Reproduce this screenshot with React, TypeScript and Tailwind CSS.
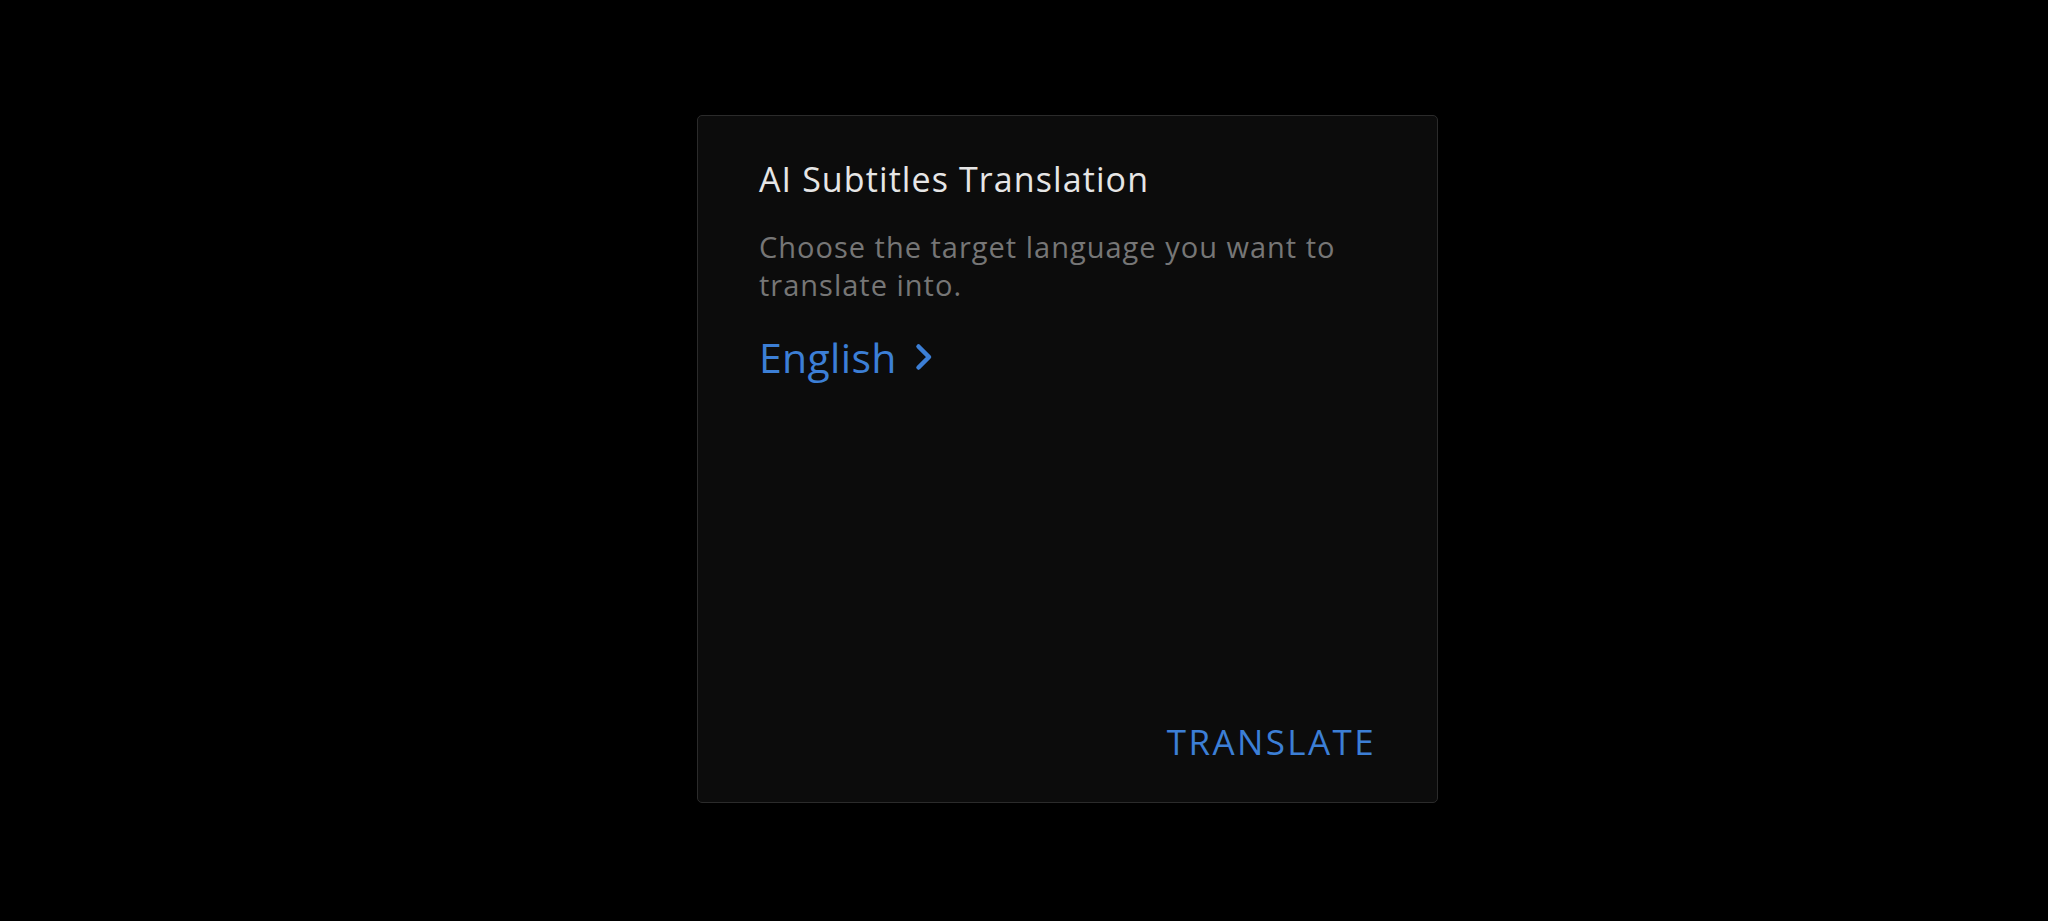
export default function App() {
  return (
    <div className="min-h-[921px] w-full bg-black" style={{ fontFamily: "'Open Sans', 'Noto Sans', sans-serif" }}>
      <div className="pt-[115px] pl-[697px]">
        <div className="flex h-[688px] w-[741px] flex-col rounded-[5px] border border-[#2b2b2b] bg-[#0c0c0c] px-[61px] pt-[43px] pb-[40px]">
          <h1 className="text-[34px] leading-[40px] font-normal tracking-[1.1px] text-[#e6e6e6]">AI Subtitles Translation</h1>
          <p className="mt-[29px] text-[29px] leading-[38px] tracking-[1px] text-[#767676]">
            Choose the target language you want to translate into.
          </p>
          <button className="mt-[29px] flex items-center gap-[18px] self-start text-[41px] leading-[48px] tracking-[0.3px] text-[#3c7fd6]">
            <span>English</span>
            <svg width="18" height="28" viewBox="0 0 18 28" fill="none">
              <path d="M3.5 3.5 L14 14 L3.5 24.5" stroke="#3c7fd6" strokeWidth="4.5" strokeLinecap="round" strokeLinejoin="round" />
            </svg>
          </button>
          <div className="mt-auto flex justify-end">
            <button className="text-[35px] leading-[40px] tracking-[2.4px] text-[#3c7fd6]">TRANSLATE</button>
          </div>
        </div>
      </div>
    </div>
  );
}
